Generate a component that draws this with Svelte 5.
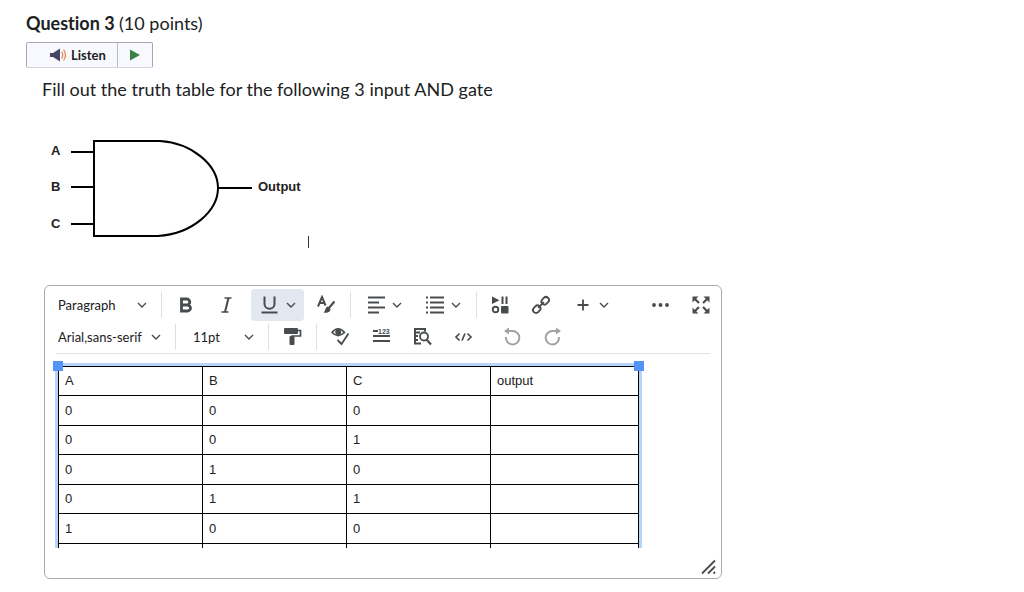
<script lang="ts">
    const columns = ['A', 'B', 'C', 'output'];
    const rows = [
        ['0', '0', '0', ''],
        ['0', '0', '1', ''],
        ['0', '1', '0', ''],
        ['0', '1', '1', ''],
        ['1', '0', '0', ''],
        ['', '', '', ''],
    ];

    let block = $state('Paragraph');
    let font = $state('Arial,sans-serif');
    let size = $state('11pt');
    let underline = $state(true);
</script>

{#snippet chevron()}
    <svg class="chevron" width="10" height="10" viewBox="0 0 10 10" aria-hidden="true">
        <path d="M1 3l4 4 4-4" fill="none" stroke="#494c4e" stroke-width="1.4" />
    </svg>
{/snippet}

<main>
    <h1>Question 3 <span>(10 points)</span></h1>

    <div class="reader">
        <button class="listen">
            <svg width="17" height="14" viewBox="0 0 17 14" aria-hidden="true">
                <path d="M0 5h3l7-4.500v13L3 9H0z" fill="#484464" />
                <path d="M11.500 3.500q2.500 3.500 0 7M13.500 1.500q4 5.500 0 11" fill="none" stroke="#e8804f" stroke-width="1.200" />
            </svg>
            Listen
        </button>
        <button class="play" aria-label="Play">
            <svg width="10" height="12" viewBox="0 0 10 12" aria-hidden="true">
                <path d="M0 0.500l10 5.500-10 5.500z" fill="#3d8046" />
            </svg>
        </button>
    </div>

    <section class="question">
        <p>Fill out the truth table for the following 3 input AND gate</p>

        <svg class="gate" width="280" height="130" viewBox="0 0 280 130" role="img" aria-label="3 input AND gate">
            <g fill="none" stroke="#000" stroke-width="2">
                <path d="M118 11H52v95h64" />
                <path d="M118 11C150 13 176 35 176 58S150 104 116 106" />
                <path d="M29 22h23M29 57h23M29 94h23M176 58h34" />
            </g>
            <g font-family="Liberation Sans, Arial, sans-serif" font-size="13" font-weight="700" fill="#222">
                <text x="9" y="25">A</text>
                <text x="9" y="61">B</text>
                <text x="9" y="98">C</text>
                <text x="216" y="61">Output</text>
            </g>
            <path d="M266.500 106v12" stroke="#333" />
        </svg>

        <div class="editor">
            <div class="toolbar">
                <div class="row">
                    <div class="group pick block">
                        <select aria-label="Block format" bind:value={block}>
                            <option>Paragraph</option>
                            <option>Heading 1</option>
                            <option>Heading 2</option>
                        </select>
                        {@render chevron()}
                    </div>
                    <div class="group">
                        <button class="tool" aria-label="Bold">
                            <svg width="20" height="20" viewBox="0 0 20 20">
                                <path d="M5.500 4h5.300a3 3 0 0 1 0 6H5.500zM5.500 10h6a3 3 0 0 1 0 6H5.500z" fill="none" stroke="#494c4e" stroke-width="2.800" />
                            </svg>
                        </button>
                        <button class="tool" aria-label="Italic">
                            <svg width="20" height="20" viewBox="0 0 20 20">
                                <path d="M7.500 3h7M4.500 17h7" stroke="#494c4e" stroke-width="1.300" />
                                <path d="M11.500 3L8 17" stroke="#494c4e" stroke-width="2" />
                            </svg>
                        </button>
                        <button class="split" class:active={underline} aria-label="Underline" onclick={() => (underline = !underline)}>
                            <svg width="20" height="20" viewBox="0 0 20 20">
                                <path d="M4.500 1.500v7.500a5 4.800 0 0 0 10 0V1.500" fill="none" stroke="#494c4e" stroke-width="2" />
                                <path d="M1.500 17.500h16" stroke="#494c4e" stroke-width="2" />
                            </svg>
                            {@render chevron()}
                        </button>
                        <button class="tool" aria-label="Text colour">
                            <svg width="20" height="20" viewBox="0 0 20 20">
                                <path d="M1 11.500L5 2 8.500 10.500M2.500 8h5" fill="none" stroke="#494c4e" stroke-width="2" />
                                <path d="M17.500 6.500L11 14" stroke="#494c4e" stroke-width="2.200" />
                                <path d="M10.500 11.500l3 2.500c0 3-3 4.500-7 3.500 2-1 1.500-5 4-6z" fill="#494c4e" />
                            </svg>
                        </button>
                    </div>
                    <div class="group wide">
                        <button class="split" aria-label="Alignment">
                            <svg width="20" height="20" viewBox="0 0 20 20">
                                <path d="M2 2.500h17M2 7.500h11M2 12.500h17M2 17.500h11" stroke="#494c4e" stroke-width="1.800" />
                            </svg>
                            {@render chevron()}
                        </button>
                        <button class="split" aria-label="List">
                            <svg width="20" height="20" viewBox="0 0 20 20">
                                <path d="M5 2.500h14M5 7.500h14M5 12.500h14M5 17.500h14" stroke="#494c4e" stroke-width="1.800" />
                                <path d="M1 2.500h2M1 7.500h2M1 12.500h2M1 17.500h2" stroke="#494c4e" stroke-width="1.800" />
                            </svg>
                            {@render chevron()}
                        </button>
                    </div>
                    <div class="group inserts">
                        <button class="tool" aria-label="Insert stuff">
                            <svg width="20" height="20" viewBox="0 0 20 20">
                                <path d="M2 1.500l7.500 3.800L2 9z" fill="#494c4e" />
                                <path d="M12.500 1.500V9M16.500 1.500V9" stroke="#494c4e" stroke-width="2" />
                                <circle cx="5.500" cy="14.500" r="2.800" fill="none" stroke="#494c4e" stroke-width="1.900" />
                                <rect x="11" y="11" width="7.500" height="7.500" rx="1" fill="#494c4e" />
                            </svg>
                        </button>
                        <button class="tool" aria-label="Insert link">
                            <svg width="20" height="20" viewBox="0 0 20 20">
                                <g fill="none" stroke="#494c4e" stroke-width="1.900" transform="rotate(-45 10 10)">
                                    <rect x="0" y="7" width="8" height="6" rx="3" />
                                    <rect x="12" y="7" width="8" height="6" rx="3" />
                                    <path d="M6 10h8" />
                                </g>
                            </svg>
                        </button>
                        <button class="split" aria-label="Add">
                            <svg width="20" height="20" viewBox="0 0 20 20">
                                <path d="M10 4.500v11M4.500 10h11" stroke="#494c4e" stroke-width="1.800" />
                            </svg>
                            {@render chevron()}
                        </button>
                    </div>
                    <div class="group end">
                        <button class="tool" aria-label="More">
                            <svg width="20" height="20" viewBox="0 0 20 20">
                                <g fill="#494c4e">
                                    <circle cx="4" cy="10" r="1.900" />
                                    <circle cx="10.500" cy="10" r="1.900" />
                                    <circle cx="17" cy="10" r="1.900" />
                                </g>
                            </svg>
                        </button>
                        <button class="tool" aria-label="Full screen">
                            <svg width="20" height="20" viewBox="0 0 20 20">
                                <path d="M3 3l5 5M17 3l-5 5M3 17l5-5M17 17l-5-5" stroke="#494c4e" stroke-width="2.200" />
                                <path d="M1.500 1.500h6l-6 6zM18.500 1.500h-6l6 6zM1.500 18.500h6l-6-6zM18.500 18.500h-6l6-6z" fill="#494c4e" />
                            </svg>
                        </button>
                    </div>
                </div>

                <div class="row">
                    <div class="group pick font">
                        <select aria-label="Font" bind:value={font}>
                            <option>Arial,sans-serif</option>
                            <option>Lato</option>
                            <option>Verdana</option>
                        </select>
                        {@render chevron()}
                    </div>
                    <div class="group pick size">
                        <select aria-label="Font size" bind:value={size}>
                            <option>11pt</option>
                            <option>14pt</option>
                            <option>18pt</option>
                        </select>
                        {@render chevron()}
                    </div>
                    <div class="group">
                        <button class="tool" aria-label="Format painter">
                            <svg width="20" height="20" viewBox="0 0 20 20">
                                <rect x="1" y="1" width="14" height="6" rx="1" fill="#494c4e" />
                                <path d="M15 3.500h2.500v5.500H9v3" fill="none" stroke="#494c4e" stroke-width="1.700" />
                                <rect x="6.500" y="9" width="5" height="9" rx="1" fill="#494c4e" />
                            </svg>
                        </button>
                    </div>
                    <div class="group">
                        <button class="tool" aria-label="Check accessibility">
                            <svg width="20" height="20" viewBox="0 0 20 20">
                                <path d="M1 5.500Q7 -2 13.500 5.500 7 11.500 1 5.500z" fill="none" stroke="#494c4e" stroke-width="1.700" />
                                <circle cx="7.200" cy="5" r="3" fill="#494c4e" />
                                <path d="M6.500 13l4 4 7-10.500" fill="none" stroke="#494c4e" stroke-width="1.800" />
                            </svg>
                        </button>
                        <button class="tool" aria-label="Word count">
                            <svg width="20" height="20" viewBox="0 0 20 20">
                                <path d="M1 4h5M1 9h17M1 14h17" stroke="#494c4e" stroke-width="1.800" />
                                <text x="6" y="7" font-family="Liberation Sans, sans-serif" font-size="7" font-weight="700" fill="#494c4e">123</text>
                            </svg>
                        </button>
                        <button class="tool" aria-label="Find">
                            <svg width="20" height="20" viewBox="0 0 20 20">
                                <path d="M12 4.500V2H2v14.500h6M3 5.500h4M3 9h2M3 13h2" fill="none" stroke="#494c4e" stroke-width="2" />
                                <circle cx="11" cy="9.500" r="4" fill="none" stroke="#494c4e" stroke-width="1.800" />
                                <path d="M13.500 12.500l4.500 5" stroke="#494c4e" stroke-width="2.200" />
                            </svg>
                        </button>
                        <button class="tool" aria-label="Source code">
                            <svg width="20" height="20" viewBox="0 0 20 20">
                                <path d="M5.500 6.500L2 10l3.500 3.500M13.500 6.500L17 10l-3.500 3.500M11 6.500l-3 7" fill="none" stroke="#494c4e" stroke-width="1.700" />
                            </svg>
                        </button>
                    </div>
                    <div class="group history">
                        <button class="tool" aria-label="Undo">
                            <svg width="20" height="20" viewBox="0 0 20 20">
                                <path d="M4 4h6.500A6.700 6.700 0 1 1 4 10" fill="none" stroke="#a0a2a3" stroke-width="2" />
                                <path d="M2 4l5-3.500v7z" fill="#a0a2a3" />
                            </svg>
                        </button>
                        <button class="tool" aria-label="Redo">
                            <svg width="20" height="20" viewBox="0 0 20 20">
                                <path d="M16 4H9.500A6.700 6.700 0 1 0 16 10" fill="none" stroke="#a0a2a3" stroke-width="2" />
                                <path d="M18 4l-5-3.500v7z" fill="#a0a2a3" />
                            </svg>
                        </button>
                    </div>
                </div>
            </div>

            <div class="content">
                <div class="selection">
                    <table>
                        <thead>
                            <tr>
                                {#each columns as column}
                                    <th scope="col">{column}</th>
                                {/each}
                            </tr>
                        </thead>
                        <tbody>
                            {#each rows as row}
                                <tr>
                                    {#each row as cell}
                                        <td>{cell}</td>
                                    {/each}
                                </tr>
                            {/each}
                        </tbody>
                    </table>
                    <span class="handle left"></span>
                    <span class="handle right"></span>
                </div>
            </div>

            <div class="footer">
                <svg width="16" height="16" viewBox="0 0 16 16" aria-hidden="true">
                    <path d="M1 14.500L14 1.500M7 14.500l7-7M12.500 14.500l1.500-1.500" stroke="#494c4e" stroke-width="1.800" />
                </svg>
            </div>
        </div>
    </section>
</main>

<style>
    :global(body) {
        margin: 0;
        background: #fff;
    }

    main {
        padding: 11px 26px;
        font-family: Lato, sans-serif;
        font-variant-ligatures: none;
        color: #202122;
    }

    h1 {
        margin: 0 0 7px;
        font-size: 18px;
        line-height: 24px;
        font-weight: 700;
    }

    h1 span {
        font-weight: 400;
    }

    button,
    select {
        font-family: inherit;
        color: inherit;
        cursor: pointer;
    }

    svg {
        display: block;
        flex: none;
    }

    .reader {
        display: flex;
        box-sizing: border-box;
        width: fit-content;
        height: 26px;
        border: 1px solid #a6a7b2;
        border-bottom-color: #d3d5dd;
        border-radius: 2px;
        background: #f8f9fe;
    }

    .reader button {
        display: flex;
        align-items: center;
        border: 0;
        background: none;
        font-size: 13px;
        font-weight: 700;
    }

    .listen {
        gap: 4px;
        padding: 0 11px 1px 23px;
    }

    .reader .play {
        padding: 0 12px;
        border-left: 1px solid #b9bac4;
    }

    .question {
        padding: 0 16px;
    }

    .question p {
        margin: 9px 0 29px;
        font-size: 18px;
        line-height: 24px;
    }

    .editor {
        max-width: 676px;
        margin: 25px 0 0 2px;
        border: 1px solid #a9abac;
        border-radius: 6px;
    }

    .toolbar {
        padding: 3px 0 0 7px;
    }

    .row {
        display: flex;
        height: 32px;
    }

    .group {
        position: relative;
        display: flex;
        align-items: center;
        padding: 0 3px;
    }

    .group + .group::before {
        content: '';
        width: 1px;
        height: 26px;
        margin: 0 3px 0 -3px;
        background: #dcdfe3;
    }

    .group.wide {
        padding-right: 4px;
    }

    .group.inserts {
        padding-right: 6px;
    }

    .group.inserts::before {
        margin-right: 2px;
    }

    .group.end {
        flex: 1;
        justify-content: flex-end;
        padding-right: 0;
    }

    .group.end::before,
    .group.history::before {
        visibility: hidden;
    }

    .tool,
    .split {
        display: flex;
        align-items: center;
        justify-content: center;
        height: 32px;
        padding: 0;
        border: 0;
        border-radius: 4px;
        background: none;
    }

    .tool {
        width: 41px;
    }

    .split {
        gap: 6px;
        width: 53px;
        margin: 0 2px 0 4px;
    }

    .wide .split {
        margin: 0 3px;
    }

    .inserts .split {
        margin: 0 0 0 3px;
    }

    .split.active {
        background: #e3e8f0;
    }

    .pick {
        box-sizing: border-box;
        padding: 0;
    }

    .block {
        width: 109px;
    }

    .font {
        width: 123px;
    }

    .group.size {
        width: 93px;
        padding-left: 3px;
    }

    .pick select {
        width: 100%;
        height: 32px;
        padding: 0 20px 0 6px;
        border: 0;
        background: none;
        appearance: none;
        font-size: 13px;
    }

    .size select {
        padding-left: 14px;
    }

    .pick .chevron {
        position: absolute;
        right: 14px;
        pointer-events: none;
    }

    .content {
        height: 182px;
        padding: 12px 13px 0;
        overflow: hidden;
    }

    .toolbar::after {
        content: '';
        display: block;
        height: 1px;
        margin: 0 11px 0 4px;
        background: #dfe1e3;
    }

    .selection {
        position: relative;
        max-width: 581px;
        box-shadow: 0 0 0 3px #b7d3fb;
    }

    table {
        width: 100%;
        table-layout: fixed;
        border-collapse: collapse;
        font-family: 'Liberation Sans', Arial, sans-serif;
        font-size: 13px;
        line-height: 16px;
    }

    th,
    td {
        box-sizing: border-box;
        height: 30px;
        padding: 0 6px;
        border: 1px solid #000;
        font-weight: 400;
        text-align: left;
    }

    th,
    tbody tr:nth-child(even) td {
        height: 29px;
    }

    th:last-child {
        width: 148px;
    }

    .handle {
        position: absolute;
        top: -5px;
        width: 10px;
        height: 10px;
        background: #5594f7;
    }

    .handle.left {
        left: -5px;
    }

    .handle.right {
        right: -5px;
    }

    .footer {
        display: flex;
        justify-content: flex-end;
        height: 16px;
        padding: 11px 4px 3px;
    }
</style>
